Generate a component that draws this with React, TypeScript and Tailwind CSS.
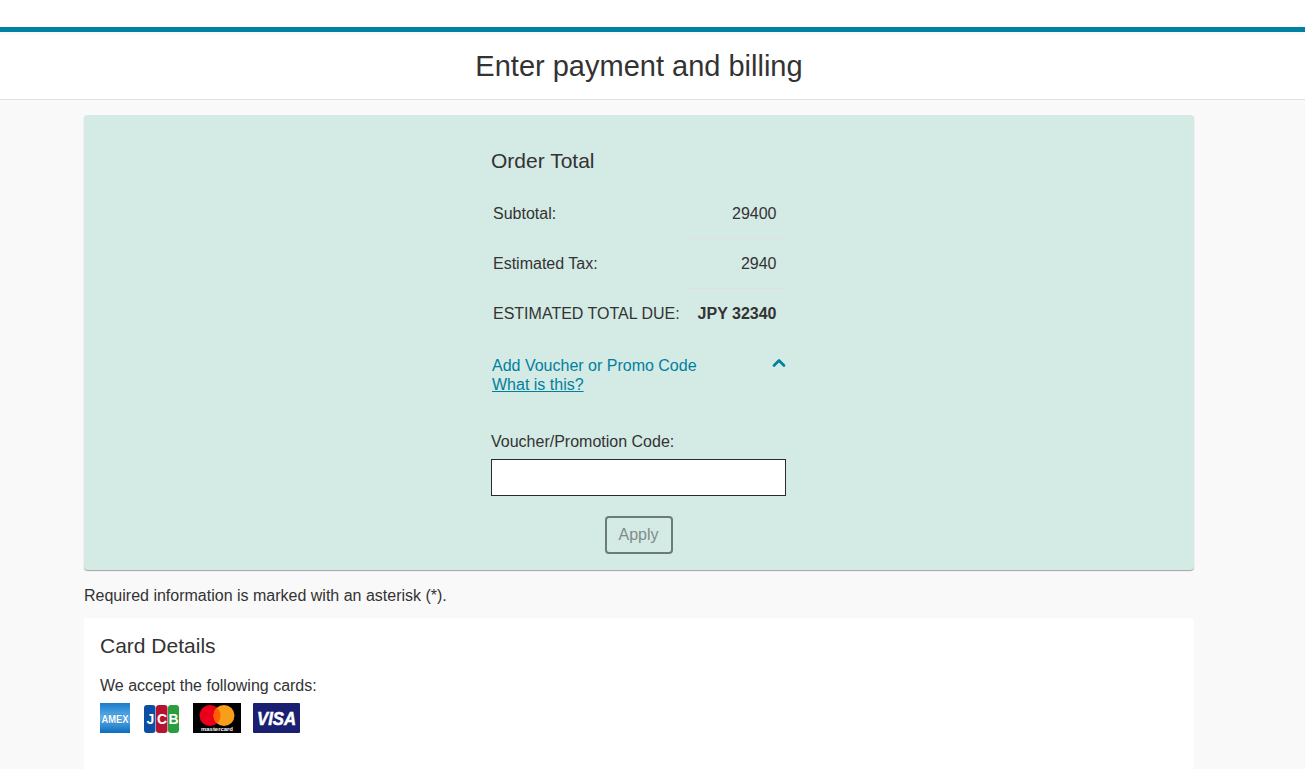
import { ChevronUp } from 'lucide-react';

function AmexLogo() {
  return (
    <svg width="30" height="30" viewBox="0 0 30 30" className="block">
      <defs>
        <linearGradient id="amexBg" x1="0" y1="0" x2="0" y2="1">
          <stop offset="0" stopColor="#1b7cc8" />
          <stop offset="0.5" stopColor="#5cb2ec" />
          <stop offset="1" stopColor="#0b6cbc" />
        </linearGradient>
      </defs>
      <rect width="30" height="30" fill="url(#amexBg)" />
      <text x="15" y="20" textAnchor="middle" fontFamily="Liberation Sans, sans-serif" fontSize="10" fontWeight="700" fill="#ffffff" stroke="#0f5fa8" strokeWidth="0.4" paintOrder="stroke" textLength="27" lengthAdjust="spacingAndGlyphs">AMEX</text>
    </svg>
  );
}

function JcbLogo() {
  return (
    <svg width="36" height="30" viewBox="0 0 36 30" className="block">
      <rect x="0" y="2" width="11.5" height="28" rx="3" fill="#0b4ea2" />
      <rect x="12" y="2" width="11.5" height="28" rx="3" fill="#b5132f" />
      <rect x="24" y="2" width="11" height="28" rx="3" fill="#2a9d3f" />
      <text x="6.5" y="21" textAnchor="middle" fontFamily="Liberation Sans, sans-serif" fontSize="14" fontWeight="700" fill="#ffffff">J</text>
      <text x="18" y="21" textAnchor="middle" fontFamily="Liberation Sans, sans-serif" fontSize="14" fontWeight="700" fill="#ffffff">C</text>
      <text x="29.5" y="21" textAnchor="middle" fontFamily="Liberation Sans, sans-serif" fontSize="14" fontWeight="700" fill="#ffffff">B</text>
    </svg>
  );
}

function MastercardLogo() {
  return (
    <svg width="48" height="30" viewBox="0 0 48 30" className="block">
      <rect width="48" height="30" fill="#000000" />
      <circle cx="17" cy="12.5" r="10.5" fill="#eb001b" />
      <circle cx="31" cy="12.5" r="10.5" fill="#f79e1b" />
      <path d="M24 4.7a10.5 10.5 0 0 1 0 15.6a10.5 10.5 0 0 1 0-15.6z" fill="#ff5f00" />
      <text x="24" y="28" textAnchor="middle" fontFamily="Liberation Sans, sans-serif" fontSize="6" fontWeight="700" fill="#ffffff" textLength="32" lengthAdjust="spacingAndGlyphs">mastercard</text>
    </svg>
  );
}

function VisaLogo() {
  return (
    <svg width="47" height="30" viewBox="0 0 47 30" className="block">
      <rect width="47" height="30" rx="1" fill="#1a1f71" />
      <text x="23.5" y="22" textAnchor="middle" fontFamily="Liberation Sans, sans-serif" fontSize="18" fontStyle="italic" fontWeight="700" fill="#ffffff" stroke="#ffffff" strokeWidth="0.5" textLength="39" lengthAdjust="spacingAndGlyphs">VISA</text>
    </svg>
  );
}

export default function App() {
  return (
    <div className="h-[769px] overflow-hidden bg-[#f9f9f9] font-['Liberation_Sans',Arial,sans-serif] text-[16px] text-[#333333]">
      <div className="h-[27px] bg-white" />
      <div className="h-[5px] bg-[#0080a3]" />
      <div className="h-[3px] bg-[#fafafa]" />
      <header className="flex h-[65px] items-center justify-center border-b border-[#e2e2e2] bg-white pb-[2px] pr-[27px]">
        <h1 className="text-[29px] leading-[36px] text-[#333333]">Enter payment and billing</h1>
      </header>

      <div className="ml-[84px] mt-[15px] w-[1110px]">
        <section className="h-[455px] rounded-[4px] bg-[#d4eae4] pl-[407px] shadow-[0_1px_1px_rgba(0,0,0,0.35)]">
          <div className="w-[295px] pt-[33px]">
            <h2 className="text-[21px] leading-[26px]">Order Total</h2>

            <div className="mt-[14px] flex h-[50px] items-start justify-between pl-[2px] pr-[9.5px] pt-[14px] leading-[24px]">
              <span>Subtotal:</span>
              <span>29400</span>
            </div>
            <div className="ml-[198px] mr-[2px] border-t border-[#dfe0df]" />
            <div className="flex h-[49px] items-start justify-between pl-[2px] pr-[9.5px] pt-[13px] leading-[24px]">
              <span>Estimated Tax:</span>
              <span>2940</span>
            </div>
            <div className="ml-[198px] mr-[2px] border-t border-[#dfe0df]" />
            <div className="flex h-[51px] items-start justify-between pl-[2px] pr-[9.5px] pt-[13px] leading-[24px]">
              <span>ESTIMATED TOTAL DUE:</span>
              <span className="font-bold">JPY 32340</span>
            </div>

            <div className="relative mt-[16px] pl-[1px] leading-[19px] text-[#00809f]">
              <div>Add Voucher or Promo Code</div>
              <a className="underline" href="#">What is this?</a>
              <ChevronUp className="absolute right-[-3px] top-[-3px] h-[20px] w-[20px]" strokeWidth={3.2} color="#00809f" />
            </div>

            <label className="mt-[38px] block leading-[20px]">Voucher/Promotion Code:</label>
            <input className="mt-[7px] block h-[37px] w-[295px] border border-[#2b2b2b] bg-white" type="text" />
            <div className="mt-[20px] flex justify-center">
              <button className="h-[38px] w-[68px] rounded-[4px] border-2 border-[#6c7b78] text-[#7f8d8a]" disabled>Apply</button>
            </div>
          </div>
        </section>

        <p className="mt-[16px] leading-[20px]">Required information is marked with an asterisk (*).</p>

        <section className="mt-[12px] h-[300px] rounded-[4px] bg-white px-[16px] pt-[16px]">
          <h2 className="text-[21px] leading-[24px]">Card Details</h2>
          <p className="mt-[18px] leading-[20px]">We accept the following cards:</p>
          <div className="mt-[7px] flex items-center">
            <AmexLogo />
            <div className="ml-[14px]"><JcbLogo /></div>
            <div className="ml-[13px]"><MastercardLogo /></div>
            <div className="ml-[12px]"><VisaLogo /></div>
          </div>
        </section>
      </div>
    </div>
  );
}
